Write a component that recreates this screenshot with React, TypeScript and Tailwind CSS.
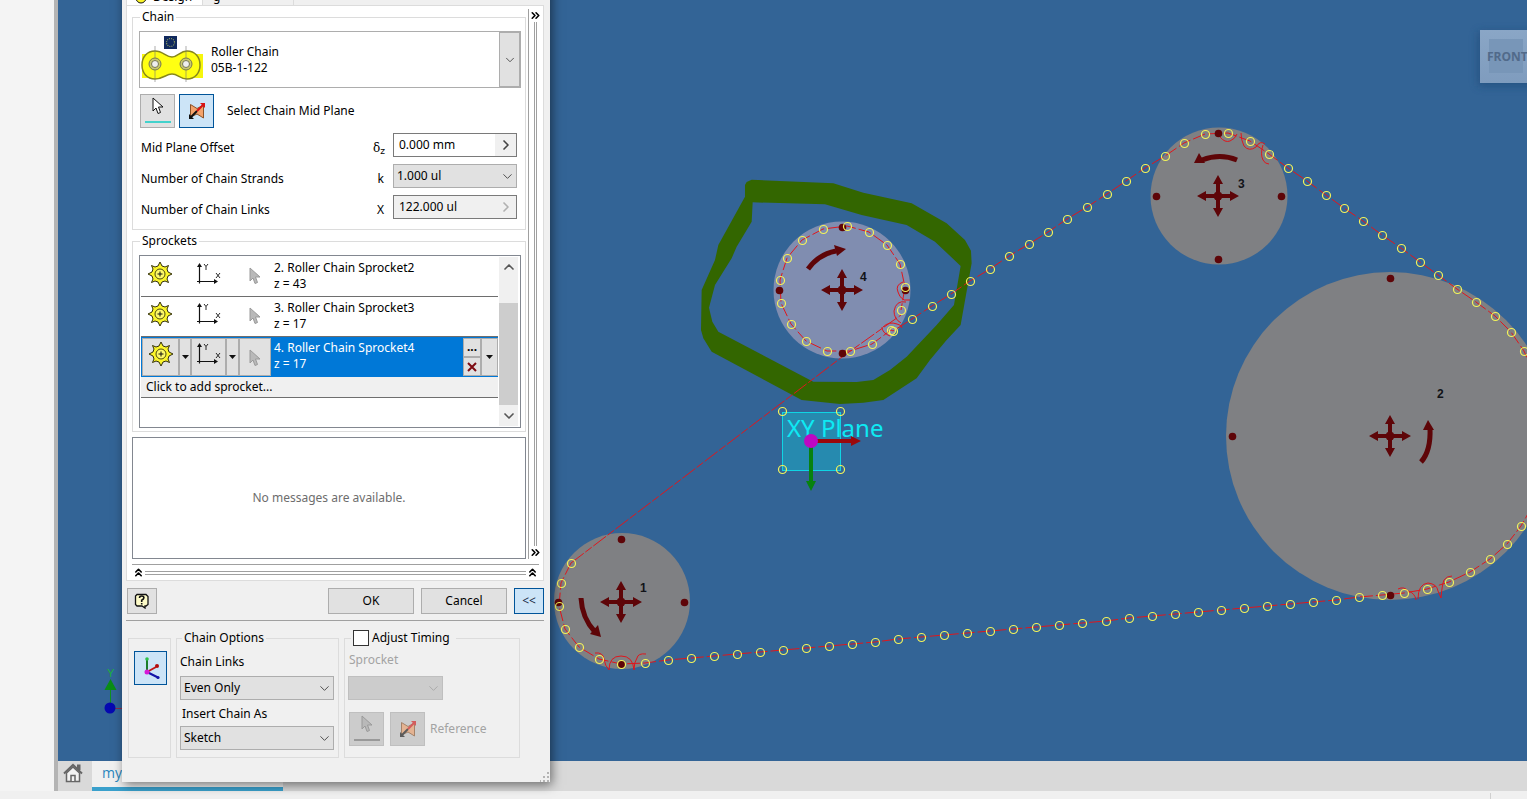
import React from "react";
import { ChevronDown, ChevronRight, ChevronUp, ChevronsRight, ChevronsUp } from "lucide-react";

type Point = [number, number];

const lowerRun: Point[] = Array.from({ length: 33 }, (_, i): Point => [
  Math.round(644.5 + 23.05 * i),
  Math.round(662.5 - 2.1 * i),
]);

const chain: Point[] = [
  [571, 563], [561, 583], [559, 606], [565, 629], [579, 647], [599, 659], [621, 664],
  ...lowerRun,
  [1404, 593], [1427, 589], [1449, 582], [1470, 572], [1490, 559], [1507, 544], [1521, 526], [1533, 505],
];

const upperChain: Point[] = [
  [1533, 372], [1524, 351], [1511, 332], [1495, 316], [1476, 302], [1457, 289], [1438, 275], [1420, 262],
  [1401, 248], [1382, 235], [1363, 221], [1344, 208], [1326, 195], [1307, 181], [1288, 168], [1269, 154],
  [1250, 141], [1228, 133], [1205, 134], [1184, 143], [1165, 156], [1145, 168], [1126, 181], [1107, 194],
  [1087, 207], [1067, 219], [1048, 232], [1029, 244], [1009, 256], [990, 269], [970, 281], [951, 294],
  [932, 306], [912, 319], [893, 331], [891, 330], [872, 344], [850, 351], [827, 351], [806, 341],
  [791, 324], [781, 303], [780, 280], [787, 258], [802, 240], [823, 229], [847, 226], [869, 232],
  [887, 245], [900, 264], [905, 287], [901, 310],
];

const handles: Point[] = [
  [621, 539], [684, 602], [621, 664], [558, 602],
  [1218, 133], [1281, 196], [1218, 259], [1156, 196],
  [842, 227], [905, 290], [842, 353], [779, 290],
  [1390, 278], [1232, 436], [1390, 595],
];

const toPath = (pts: Point[]) => pts.map((p) => p.join(",")).join(" ");

function Ring({ at }: { at: Point }) {
  return <circle cx={at[0] + 0.5} cy={at[1] + 0.5} r="4" fill="none" stroke="#f4f45a" strokeWidth="1.200" />;
}

function MoveCross({ x, y }: { x: number; y: number }) {
  return (
    <g transform={`translate(${x} ${y})`} fill="#5e0508">
      <path d="M-15-2H15V2H-15ZM-2-15H2V15H-2Z" />
      <path d="M-21 0l9-5v10ZM21 0l-9-5v10ZM0-21l5 9h-10ZM0 21l5-9h-10Z" />
      <circle r="4.5" />
    </g>
  );
}

function Scene() {
  return (
    <svg
      className="block h-full w-full"
      viewBox="58 0 1469 761"
      preserveAspectRatio="xMinYMin slice"
      role="img"
      aria-label="Chain layout"
    >
      <defs>
        <linearGradient id="cube" x1="0" y1="0" x2="0" y2="1">
          <stop offset="0" stopColor="#8aa6c6" />
          <stop offset="1" stopColor="#7f9cbe" />
        </linearGradient>
        <filter id="soft" x="-20%" y="-20%" width="140%" height="140%">
          <feGaussianBlur stdDeviation="4" />
        </filter>
      </defs>
      <rect x="58" width="1469" height="761" fill="#336496" />
      <rect x="1478" y="32" width="60" height="54" fill="#1f4674" opacity=".6" filter="url(#soft)" />
      <rect x="1480" y="30" width="60" height="53" fill="url(#cube)" />
      <rect x="1489" y="39" width="34" height="34" fill="#7896b8" />
      <text x="1487" y="61" fontSize="12" fontWeight="700" fill="#516a8a" fontFamily="Open Sans, sans-serif">
        FRONT
      </text>

      <circle cx="622" cy="601" r="68" fill="#7f8083" />
      <circle cx="1390" cy="436" r="164" fill="#7f8083" />
      <circle cx="1219" cy="196" r="68.5" fill="#7f8083" />
      <circle cx="842" cy="290" r="68.5" fill="#808db0" />
      <path
        transform="translate(690 170) scale(.3333)"
        fill="#336600"
        fillRule="evenodd"
        d="M165 45 170 36 185 29 430 40 520 68 665 100 770 160 825 210 843 242 845 280 812 465 770 510 720 570 680 625 580 690 520 698 450 702 335 690 65 545 40 505 33 480 35 360 75 270 85 225 165 80ZM188 97 405 103 515 135 650 165 735 215 812 288 792 405 740 465 650 560 600 600 550 630 500 636 370 635 85 485 67 455 57 413 75 345 125 265 140 230 185 155Z"
      />

      <g fill="none" stroke="#e0161c">
        <polyline points={toPath(chain)} strokeDasharray="13 3" />
        <polyline points={toPath(upperChain)} strokeDasharray="13 3" />
        <path d="M571 563 842 357 901 315" strokeDasharray="16 2 8 2" />
        <path d="M595 653q8-1 9 6t5 11M609 670q0-14 12-14t13 14M634 670q0-8 3-12 1-5 9-4" />
        <path d="M1220 137q5 6 10 4 5-2 7-7M1241 133q0 7 3 13 5 6 12 1 4-7 9-3M1263 145q-3 9 0 15 2 4 6 4" />
        <path d="M1398 589q6-3 10 2 7 2 8 9M1418 599q0-15 10-16 9 1 10 8l3 7M1441 598q1-13 3-18 3-4 8-4" />
        <path d="M903 282q-8 3-5 10 1 5 6 8h6M906 302q-10-2-12 9 0 8 7 12M883 327q6-6 14-3 5 1 5 4M882 327q0 6 8 9" />
      </g>

      <g fill="#5e0508">
        {handles.map((p) => (
          <circle key={p.join()} cx={p[0] + 0.5} cy={p[1] + 0.5} r="3.8" />
        ))}
      </g>
      {chain.map((p) => (
        <Ring key={p.join()} at={p} />
      ))}
      {upperChain.map((p) => (
        <Ring key={p.join()} at={p} />
      ))}

      <MoveCross x={621} y={602} />
      <MoveCross x={1390} y={436} />
      <MoveCross x={1218} y={196} />
      <MoveCross x={842} y={290} />

      <g fill="none" stroke="#5e0508" strokeWidth="5">
        <path d="M581 598q1 20 14 34" />
        <path d="M1421 462q10-11 9-34" />
        <path d="M1237 160q-17-7-35 0" />
        <path d="M808 269q11-15 28-18" />
      </g>
      <g fill="#5e0508">
        <path d="M601 637l-11-3 8-9Z" />
        <path d="M1428 420l-5 10 11 0Z" />
        <path d="M1194 163l5-10 6 10Z" />
        <path d="M846 249l-12-4 3 11Z" />
      </g>

      <g fontFamily="Liberation Sans, sans-serif" fontSize="12" fontWeight="700" fill="#111318">
        <text x="640" y="592">1</text>
        <text x="1437" y="398">2</text>
        <text x="1238" y="188">3</text>
        <text x="860" y="281">4</text>
      </g>

      <rect x="782.5" y="412.5" width="58" height="58" fill="#268aaf" stroke="#0fd5e4" />
      <text x="787" y="437" fontSize="24" fill="#0ee9f3" fontFamily="Noto Sans, sans-serif">
        XY Plane
      </text>
      <Ring at={[782, 411]} />
      <Ring at={[840, 411]} />
      <Ring at={[782, 469]} />
      <Ring at={[840, 469]} />
      <path d="M811 439h40v-3l10 5-10 5v-3h-40Z" fill="#9b080b" />
      <path d="M809 441v40h-3l5 10 5-10h-3v-40Z" fill="#07820f" />
      <circle cx="811" cy="441" r="7" fill="#be08c3" />

      <path d="M110.500 703V690" stroke="#10921e" />
      <path d="M110.500 679l6 11h-12Z" fill="#0a8d14" />
      <path d="M110 708.500h14" stroke="#8a2d50" />
      <circle cx="110" cy="708" r="5.500" fill="#0508b0" />
      <text x="107" y="677" fontSize="11" fill="#1cb13c" fontFamily="Liberation Sans, sans-serif">Y</text>
    </svg>
  );
}

function ArrowCursor({ dim = false }: { dim?: boolean }) {
  return (
    <svg width="14" height="18" viewBox="0 0 14 18" aria-hidden="true">
      <path
        d="M2 1v13l3-3 2 5.500 2.500-1L7.500 10H12Z"
        fill={dim ? "#b9b9b9" : "#fff"}
        stroke={dim ? "#9a9a9a" : "#111"}
        strokeWidth="1"
      />
    </svg>
  );
}

function PlaneIcon() {
  return (
    <svg width="20" height="20" viewBox="0 0 20 20" aria-hidden="true">
      <path d="M3.500 3.500 10 7.500 16.500 4V17L10 13 3.500 16Z" fill="#f4a36c" stroke="#8a5228" />
      <path d="M4 16 10 10" stroke="#111" strokeWidth="2" />
      <path d="M2 18v-5l5 5Z" fill="#111" />
      <path d="M10 10 16 4" stroke="#d81414" strokeWidth="2" />
      <path d="M18 2v5l-5-5Z" fill="#d81414" />
    </svg>
  );
}

function SprocketIcon() {
  return (
    <svg width="26" height="26" viewBox="-13 -13 26 26" aria-hidden="true">
      <path
        d="M-2-8 0-12 2-8 5-7 8.500-8.500 7-5 8-2 12 0 8 2 7 5 8.500 8.500 5 7 2 8 0 12-2 8-5 7-8.500 8.500-7 5-8 2-12 0-8-2-7-5-8.500-8.500-5-7Z"
        fill="#fbf52a"
        stroke="#33300a"
      />
      <circle r="5" fill="#fdf96a" stroke="#4c480c" />
      <path d="M-2.500 0h5M0-2.500v5" stroke="#111" />
    </svg>
  );
}

function AxesIcon() {
  return (
    <svg width="26" height="24" viewBox="0 0 26 24" aria-hidden="true" fill="none" stroke="#111">
      <path d="M3.500 2v18.500M1 18.500h19" strokeWidth="1.200" />
      <path d="M3.500 0 6 4H1ZM22 18.500l-4-2.500v5Z" fill="#111" stroke="none" />
      <path d="M8 1l2 2.500L12 1M10 3.500V7M20 10l4 5M24 10l-4 5" strokeWidth=".9" />
    </svg>
  );
}

function RollerChainIcon() {
  return (
    <svg width="64" height="46" viewBox="0 0 64 46" aria-hidden="true">
      <path d="M1 18H8V42H1ZM52 18H62V42H52Z" fill="#f6f60c" />
      <path d="M14 15c8 0 11 6 17 6s8-6 15-6c8 0 13 6 13 14s-5 14-13 14c-7 0-9-5-15-5s-9 5-17 5C6 43 1 37 1 29s5-14 13-14Z" fill="#ffff12" stroke="#87871d" strokeWidth="1.500" />
      <path d="M14 10v36M45 10v36" stroke="#777" strokeWidth=".6" />
      <g fill="#eee" stroke="#777752">
        <circle cx="14" cy="28" r="6" fill="#c9c96a" />
        <circle cx="14" cy="28" r="3.500" />
        <circle cx="45" cy="28" r="6" fill="#c9c96a" />
        <circle cx="45" cy="28" r="3.500" />
      </g>
      <rect x="23" y="0" width="13" height="13" fill="#122a5e" />
      <circle cx="29.500" cy="6.500" r="4" fill="none" stroke="#93a35e" strokeWidth="1.200" strokeDasharray="1 1.100" />
    </svg>
  );
}

function HelpIcon() {
  return (
    <svg width="16" height="16" viewBox="0 0 16 16" aria-hidden="true">
      <path d="M3 1.500h9l2 2v8l-2 1.500h-1v2l-3-2H3l-1.500-1.500V3Z" fill="#fdfbc8" stroke="#111" strokeWidth="1.300" />
      <path d="M5.500 5q0-2 2.200-2t2.200 1.700Q9.900 6 7.700 7.200V9M7.700 10v1.600" fill="none" stroke="#111" strokeWidth="1.600" />
    </svg>
  );
}

function TriadIcon() {
  return (
    <svg width="24" height="26" viewBox="0 0 24 26" aria-hidden="true" fill="none">
      <path d="M8 17V5" stroke="#1c7d2a" strokeWidth="2" />
      <circle cx="8" cy="4" r="1.800" fill="#2dc24a" />
      <path d="M8 17l9-5" stroke="#c31616" strokeWidth="2" />
      <circle cx="18" cy="11" r="2" fill="#b30c0c" />
      <path d="M8 17l11 5.500" stroke="#1313a8" strokeWidth="2" />
      <circle cx="19" cy="22.500" r="1.600" fill="#1313a8" />
      <circle cx="8" cy="17" r="2.500" fill="#d61ad6" />
    </svg>
  );
}

function DownTriangle() {
  return (
    <svg width="7" height="4" viewBox="0 0 7 4" aria-hidden="true">
      <path d="M0 0h7L3.500 4Z" fill="#111" />
    </svg>
  );
}

function SelectBox({ id, value, disabled = false, className }: { id: string; value: string; disabled?: boolean; className: string }) {
  return (
    <div className={`grid items-center ${className}`}>
      <select
        id={id}
        defaultValue={value}
        disabled={disabled}
        className={`col-start-1 row-start-1 h-6 w-full appearance-none border px-[3px] ${
          disabled ? "border-[#bfbfbf] bg-[#cccccc]" : "border-[#adadad] bg-[#e1e1e1]"
        }`}
      >
        <option>{value}</option>
      </select>
      <ChevronDown
        className={`pointer-events-none col-start-1 row-start-1 mr-0.5 justify-self-end ${disabled ? "text-[#a8a8a8]" : "text-[#444]"}`}
        size={15}
        strokeWidth={1.5}
      />
    </div>
  );
}

function ValueField({ id, value, locked = false }: { id: string; value: string; locked?: boolean }) {
  return (
    <div className={`flex h-6 w-[124px] border border-[#7a7a7a] ${locked ? "bg-[#f0f0f0]" : "bg-white"}`}>
      <input id={id} defaultValue={value} readOnly={locked} className="min-w-0 flex-1 bg-transparent px-[5px] outline-none" />
      <button type="button" aria-label="More" className="flex w-[21px] items-center justify-center bg-[#f0f0f0]">
        <ChevronRight size={16} strokeWidth={2.5} className={locked ? "text-[#b0b0b0]" : "text-[#444]"} />
      </button>
    </div>
  );
}

function ParamRow({ id, label, symbol, children }: { id: string; label: string; symbol: React.ReactNode; children: React.ReactNode }) {
  return (
    <div className="flex h-6 items-center pr-1 pl-0.5">
      <label htmlFor={id} className="flex-1 pt-1.5">{label}</label>
      <span className="w-5 pt-1.5 pr-[9px] text-right whitespace-nowrap">{symbol}</span>
      {children}
    </div>
  );
}

function SprocketRow({ name, teeth }: { name: string; teeth: number }) {
  return (
    <li className="flex h-10 border-b border-[#6e6e6e]">
      <span className="flex w-[46px] justify-center pt-1 pr-[8px]"><SprocketIcon /></span>
      <span className="flex w-[48px] justify-center pt-1.5 pr-1"><AxesIcon /></span>
      <span className="flex w-[36px] justify-center pt-2.5 pl-1"><ArrowCursor dim /></span>
      <span className="pt-[3px] pl-[3px] leading-4">{name}<br />z = {teeth}</span>
    </li>
  );
}

function SelectedSprocketRow() {
  const cell = "flex border border-[#adadad] bg-[#e1e1e1]";
  return (
    <li className="flex h-10 bg-[#0078d7] py-px pl-px text-white">
      <button type="button" aria-label="Sprocket type" className={`${cell} w-[37px] justify-center pt-0.5`}><SprocketIcon /></button>
      <button type="button" aria-label="Sprocket type menu" className={`${cell} w-3 items-center justify-center`}><DownTriangle /></button>
      <button type="button" aria-label="Placement" className={`${cell} w-[35px] justify-center pt-1`}><AxesIcon /></button>
      <button type="button" aria-label="Placement menu" className={`${cell} w-[13px] items-center justify-center`}><DownTriangle /></button>
      <button type="button" aria-label="Pick" className={`${cell} w-8 justify-center pt-2.5`}><ArrowCursor dim /></button>
      <span className="flex-1 pt-0.5 pl-[3px] leading-4">4. Roller Chain Sprocket4<br />z = 17</span>
      <span className="flex w-[18px] flex-col">
        <button type="button" className={`${cell} h-[19px] items-end justify-center pb-px leading-4 font-bold text-black`}>...</button>
        <button type="button" aria-label="Remove" className={`${cell} h-[19px] items-center justify-center`}>
          <svg width="10" height="10" viewBox="0 0 10 10" aria-hidden="true"><path d="M1 1l8 8M9 1 1 9" stroke="#7d0b12" strokeWidth="2" /></svg>
        </button>
      </span>
      <button type="button" aria-label="Row menu" className={`${cell} w-[17px] items-center justify-center`}><DownTriangle /></button>
    </li>
  );
}

function ChainGroup() {
  return (
    <fieldset className="min-w-0 border border-[#dcdcdc] pr-1 pb-[10px] pl-1.5">
      <legend className="ml-px h-4 px-0.5 leading-4">Chain</legend>
      <button type="button" aria-haspopup="listbox" className="mt-1.5 flex h-[57px] w-full items-stretch border border-[#adadad] bg-white text-left">
        <span className="pt-1 pl-px"><RollerChainIcon /></span>
        <span className="flex-1 pt-3 pl-1.5 leading-4">Roller Chain<br />05B-1-122</span>
        <span className="flex w-[21px] items-center justify-center border border-[#adadad] bg-[#e1e1e1]">
          <ChevronDown size={14} strokeWidth={1.5} className="text-[#444]" />
        </span>
      </button>
      <div className="mt-1.5 flex items-center pl-px">
        <button type="button" aria-label="Select path" className="flex h-[34px] w-[35px] flex-col items-center justify-between border border-[#adadad] bg-[#e1e1e1] pt-0.5 pb-1">
          <ArrowCursor />
          <span className="h-0.5 w-[26px] bg-[#42d2cc]" />
        </button>
        <button type="button" id="midplane" aria-label="Mid plane" className="ml-1 flex h-[34px] w-[35px] items-center justify-center border border-[#005499] bg-[#cce4f7]">
          <PlaneIcon />
        </button>
        <label htmlFor="midplane" className="ml-[13px]">Select Chain Mid Plane</label>
      </div>
      <div className="mt-[5px] flex flex-col gap-[7px]">
        <ParamRow id="offset" label="Mid Plane Offset" symbol={<span className="font-['DejaVu_Serif','Liberation_Serif',serif]">δ<sub className="font-['DejaVu_Sans',sans-serif] text-[9px]">z</sub></span>}>
          <ValueField id="offset" value="0.000 mm" />
        </ParamRow>
        <ParamRow id="strands" label="Number of Chain Strands" symbol="k">
          <SelectBox id="strands" value="1.000 ul" className="w-[124px]" />
        </ParamRow>
        <ParamRow id="links" label="Number of Chain Links" symbol="X">
          <ValueField id="links" value="122.000 ul" locked />
        </ParamRow>
      </div>
    </fieldset>
  );
}

function SprocketsGroup() {
  return (
    <fieldset className="mt-[3px] min-w-0 border border-[#dcdcdc] pr-1 pb-[3px] pl-1.5">
      <legend className="ml-px h-4 px-0.5 leading-4">Sprockets</legend>
      <div className="mt-1.5 flex h-[173px] border border-[#828790] p-px">
        <ul className="flex-1">
          <SprocketRow name="2. Roller Chain Sprocket2" teeth={43} />
          <SprocketRow name="3. Roller Chain Sprocket3" teeth={17} />
          <SelectedSprocketRow />
          <li className="h-[21px] border-b border-[#6e6e6e] bg-[#f0f0f0] pl-[5px] leading-5">Click to add sprocket...</li>
        </ul>
        <div className="mr-px ml-px flex w-[19px] flex-col items-center bg-[#f0f0f0]">
          <button type="button" aria-label="Scroll up" className="flex h-5 items-center text-[#555]"><ChevronUp size={16} strokeWidth={2.5} /></button>
          <div className="mt-[26px] w-full flex-1 bg-[#cdcdcd]" />
          <button type="button" aria-label="Scroll down" className="flex h-[21px] items-center text-[#555]"><ChevronDown size={16} strokeWidth={2.5} /></button>
        </div>
      </div>
    </fieldset>
  );
}

function OptionsPanel() {
  return (
    <div className="mt-[9px] flex gap-[5px] pl-0.5">
      <div className="mt-2 h-[120px] w-[43px] border border-[#dcdcdc] pt-3 pl-[5px]">
        <button type="button" aria-label="Show coordinate system" className="flex h-[34px] w-[33px] items-center justify-center border border-[#005499] bg-[#cce4f7]">
          <TriadIcon />
        </button>
      </div>
      <fieldset className="h-32 w-[163px] border border-[#dcdcdc] px-[3px]">
        <legend className="ml-0.5 h-4 px-0.5 leading-4">Chain Options</legend>
        <label htmlFor="chain-links" className="mt-2 block leading-4">Chain Links</label>
        <SelectBox id="chain-links" value="Even Only" className="mt-1.5 w-[154px]" />
        <label htmlFor="insert-as" className="mt-1.5 block pl-0.5 leading-4">Insert Chain As</label>
        <SelectBox id="insert-as" value="Sketch" className="mt-1 w-[154px]" />
      </fieldset>
      <fieldset className="h-32 w-44 border border-[#dcdcdc] px-[3px]">
        <legend className="ml-[3px] flex h-4 items-center gap-0.5 pr-1.5 pl-0.5 leading-4">
          <input id="timing" type="checkbox" className="size-4 appearance-none border border-[#333] bg-white" />
          <label htmlFor="timing" className="pl-px">Adjust Timing</label>
        </legend>
        <label htmlFor="timing-sprocket" className="mt-1.5 block pl-px leading-4 text-[#a3a3a3]">Sprocket</label>
        <SelectBox id="timing-sprocket" value="" disabled className="mt-2 w-[95px]" />
        <div className="mt-3 flex items-center pl-px">
          <button type="button" disabled aria-label="Pick reference" className="flex h-[34px] w-[35px] flex-col items-center justify-between border border-[#bfbfbf] bg-[#cccccc] pt-0.5 pb-1">
            <ArrowCursor dim />
            <span className="h-0.5 w-[26px] bg-[#999]" />
          </button>
          <button type="button" disabled id="reference" aria-label="Reference plane" className="ml-1.5 flex h-[34px] w-[35px] items-center justify-center border border-[#bfbfbf] bg-[#cccccc]">
            <span className="opacity-60"><PlaneIcon /></span>
          </button>
          <label htmlFor="reference" className="ml-[5px] text-[#a3a3a3]">Reference</label>
        </div>
      </fieldset>
    </div>
  );
}

function ChainDialog() {
  const push = "h-[26px] border border-[#adadad] bg-[#e1e1e1]";
  return (
    <section
      role="dialog"
      aria-label="Roller chains generator"
      className="absolute -top-5 left-[122px] w-[428px] bg-[#f0f0f0] pr-1.5 pb-6 pl-1 shadow-[2px_3px_10px_rgba(0,0,0,0.5)]"
    >
      <div role="tablist" className="flex h-[25px] leading-4">
        <button type="button" role="tab" aria-selected="true" className="flex w-[76px] items-center gap-1.5 border-l border-[#dcdcdc] bg-white pt-2 pl-2">
          <svg width="12" height="14" viewBox="0 0 12 14" aria-hidden="true"><circle cx="6" cy="8" r="5" fill="#fbf52a" stroke="#111" /></svg>
          Design
        </button>
        <button type="button" role="tab" aria-selected="false" className="flex w-[92px] items-center border-x border-[#dcdcdc] pt-2 pl-2.5">
          g
        </button>
      </div>
      <div className="border border-[#dcdcdc] bg-white pb-px">
        <div className="flex pt-[3px] pl-[5px]">
          <div className="w-[394px]">
            <ChainGroup />
            <SprocketsGroup />
            <div className="mt-[5px] flex h-[122px] items-center justify-center border border-[#828790] text-[#6d6d6d]">No messages are available.</div>
          </div>
          <div className="ml-0.5 flex w-[13px] flex-col items-center border-l border-[#a0a0a0]">
            <ChevronsRight size={13} strokeWidth={3} className="shrink-0 text-black" />
            <div className="w-[3px] flex-1 border-x border-[#a0a0a0]" />
            <ChevronsRight size={13} strokeWidth={3} className="shrink-0 text-black" />
          </div>
        </div>
        <div className="mt-[5px] mr-1 ml-[5px] flex items-center border-t border-[#a0a0a0] pt-px">
          <ChevronsUp size={13} strokeWidth={3} className="text-black" />
          <div className="h-1 flex-1 border-y border-[#a0a0a0]" />
          <ChevronsUp size={13} strokeWidth={3} className="text-black" />
        </div>
      </div>
      <div className="mt-[7px] flex pl-px">
        <button type="button" aria-label="Help" className={`${push} flex w-[30px] items-center justify-center`}><HelpIcon /></button>
        <button type="button" className={`${push} ml-auto w-[86px]`}>OK</button>
        <button type="button" className={`${push} ml-[7px] w-[86px]`}>Cancel</button>
        <button type="button" className="ml-[7px] h-[26px] w-[30px] border border-[#005499] bg-[#cce4f7] text-[#1a2a44]">&lt;&lt;</button>
      </div>
      <hr className="mt-1.5 border-[#a0a0a0]" />
      <OptionsPanel />
      <svg className="absolute right-0 bottom-0" width="10" height="10" viewBox="0 0 10 10" aria-hidden="true" fill="#b4b4b4">
        <path d="M7 0h2v2H7ZM7 4h2v2H7ZM7 8h2v2H7ZM3 4h2v2H3ZM3 8h2v2H3ZM0 8h1v2H0Z" />
      </svg>
    </section>
  );
}

export default function App() {
  return (
    <div className="relative flex h-screen flex-col overflow-hidden bg-[#f0f0f0] font-['Noto_Sans','DejaVu_Sans',sans-serif] text-[12px] text-black">
      <div className="flex min-h-0 flex-1">
        <aside className="w-[54px] shrink-0 bg-[#f4f4f4]" />
        <div className="w-1 shrink-0 bg-[#b4b4b4]" />
        <main className="flex min-w-0 flex-1 flex-col">
          <div className="min-h-0 flex-1"><Scene /></div>
          <nav className="flex h-[30px] shrink-0 bg-[#d9d9d9]">
            <button type="button" aria-label="Home" className="flex w-[34px] items-center justify-center pr-1 pb-1.5">
              <svg width="20" height="20" viewBox="0 0 20 20" aria-hidden="true" fill="#f2f2f2" stroke="#666" strokeWidth="1.500">
                <path d="M3.500 10v8.500h13V10L10 4Z" />
                <path d="M1 10.500 10 2l9 8.500M15 6V2.500h1.500V7" fill="none" strokeWidth="2" />
                <path d="M8 18v-5.500h4V18" />
              </svg>
            </button>
            <a href="#my" className="w-[191px] border-b-4 border-[#3aa0cc] bg-[#f0f0f0] pl-2.5 font-['Open_Sans',sans-serif] text-[14px] leading-6 text-[#2a86bd]">my</a>
          </nav>
        </main>
      </div>
      <footer className="flex h-2 shrink-0 justify-end bg-[#f0f0f0] pt-0.5 pr-9">
        <div className="w-px bg-[#cfcfcf]" />
      </footer>
      <ChainDialog />
    </div>
  );
}
